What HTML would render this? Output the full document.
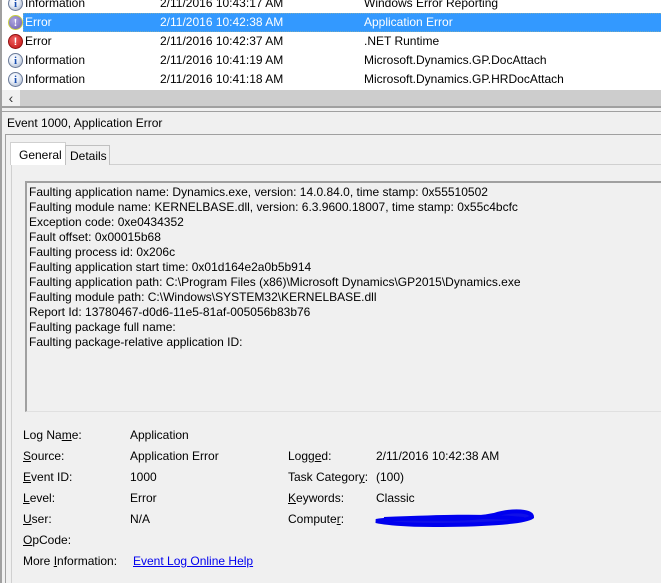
<!DOCTYPE html>
<html><head><style>
*{margin:0;padding:0;box-sizing:border-box}
body{width:661px;height:583px;overflow:hidden;background:#f0f0f0;font-family:"Liberation Sans",sans-serif;font-size:12px;color:#000;position:relative}
.a{position:absolute;white-space:nowrap}
.list{position:absolute;left:0;top:0;width:661px;height:106px;background:#fff;border-left:2px solid #a0a0a0}
.row{position:absolute;left:0;width:659px;height:19px}
.row span{position:absolute;top:2px}
.ic{position:absolute;left:6px;top:2px;width:15px;height:15px;border-radius:50%;color:#fff;font-weight:bold;font-size:11px;text-align:center;line-height:15px;font-family:"Liberation Serif",serif}
.info{background:radial-gradient(circle at 40% 35%,#fff 0,#e8eef8 40%,#9aa8c0 100%);border:1px solid #6a7a98;color:#1b4fb0}
.err{background:radial-gradient(circle at 40% 35%,#f06060,#c01010);border:1px solid #901010;font-family:"Liberation Sans",sans-serif}
.sel{background:#3399ff;color:#fff}
u{text-decoration:underline}
.lk{color:#0000ee;text-decoration:underline}
</style></head><body>
<div class="list">
 <div class="row" style="top:-6px"><div class="ic info">i</div><span style="left:23px">Information</span><span style="left:158px">2/11/2016 10:43:17 AM</span><span style="left:362px">Windows Error Reporting</span></div>
 <div class="row" style="top:13px"><div class="sel" style="position:absolute;left:21px;top:0;width:640px;height:19px;border:1px dotted #7ab"></div><div class="ic" style="background:radial-gradient(circle at 40% 35%,#b0a8e0,#6a5cb0);border:1px solid #c8d040">!</div><span style="left:23px;color:#fff">Error</span><span style="left:158px;color:#fff">2/11/2016 10:42:38 AM</span><span style="left:362px;color:#fff">Application Error</span></div>
 <div class="row" style="top:32px"><div class="ic err">!</div><span style="left:23px">Error</span><span style="left:158px">2/11/2016 10:42:37 AM</span><span style="left:362px">.NET Runtime</span></div>
 <div class="row" style="top:51px"><div class="ic info">i</div><span style="left:23px">Information</span><span style="left:158px">2/11/2016 10:41:19 AM</span><span style="left:362px">Microsoft.Dynamics.GP.DocAttach</span></div>
 <div class="row" style="top:70px"><div class="ic info">i</div><span style="left:23px">Information</span><span style="left:158px">2/11/2016 10:41:18 AM</span><span style="left:362px">Microsoft.Dynamics.GP.HRDocAttach</span></div>
 <div style="position:absolute;left:0;top:90px;width:659px;height:16px;background:#cdcdcd"></div>
 <div style="position:absolute;left:0;top:90px;width:18px;height:16px;background:#f0f0f0;font-size:14px;text-align:center;line-height:16px;color:#333">&#8249;</div>
</div>
<div class="a" style="left:0;top:106px;width:661px;height:2px;background:#a0a0a0"></div>
<div class="a" style="left:0;top:111px;width:661px;height:1px;background:#a0a0a0"></div>
<div class="a" style="left:0;top:108px;width:2px;height:475px;background:#a0a0a0"></div>
<div class="a" style="left:7px;top:116px;font-size:12px">Event 1000, Application Error</div>
<div class="a" style="left:5px;top:134px;width:656px;height:1px;background:#a0a0a0"></div>
<div class="a" style="left:5px;top:135px;width:1px;height:448px;background:#a0a0a0"></div>
<div class="a" style="left:11px;top:164px;width:700px;height:419px;border-left:1px solid #d0d0d0;border-top:1px solid #d0d0d0"></div>
<div class="a" style="left:10px;top:142px;width:56px;height:23px;background:#fff;border:1px solid #d0d0d0;border-bottom:none;padding:5px 0 0 8px">General</div>
<div class="a" style="left:65px;top:145px;width:45px;height:20px;background:#f0f0f0;border:1px solid #c0c0c0;border-bottom:none;padding:3px 0 0 4px">Details</div>
<div class="a" style="left:25px;top:181px;width:700px;height:231px;border-left:2px solid #a0a0a0;border-top:2px solid #a0a0a0;border-bottom:1px solid #e0e0e0;padding:2px 0 0 2px;line-height:15px;white-space:pre">Faulting application name: Dynamics.exe, version: 14.0.84.0, time stamp: 0x55510502
Faulting module name: KERNELBASE.dll, version: 6.3.9600.18007, time stamp: 0x55c4bcfc
Exception code: 0xe0434352
Fault offset: 0x00015b68
Faulting process id: 0x206c
Faulting application start time: 0x01d164e2a0b5b914
Faulting application path: C:\Program Files (x86)\Microsoft Dynamics\GP2015\Dynamics.exe
Faulting module path: C:\Windows\SYSTEM32\KERNELBASE.dll
Report Id: 13780467-d0d6-11e5-81af-005056b83b76
Faulting package full name: 
Faulting package-relative application ID: </div>
<div class="a" style="left:23px;top:428px">Log Na<u>m</u>e:</div><div class="a" style="left:130px;top:428px">Application</div>
<div class="a" style="left:23px;top:449px"><u>S</u>ource:</div><div class="a" style="left:130px;top:449px">Application Error</div>
<div class="a" style="left:288px;top:449px">Logg<u>e</u>d:</div><div class="a" style="left:376px;top:449px">2/11/2016 10:42:38 AM</div>
<div class="a" style="left:23px;top:470px"><u>E</u>vent ID:</div><div class="a" style="left:130px;top:470px">1000</div>
<div class="a" style="left:288px;top:470px">Task Categor<u>y</u>:</div><div class="a" style="left:376px;top:470px">(100)</div>
<div class="a" style="left:23px;top:491px"><u>L</u>evel:</div><div class="a" style="left:130px;top:491px">Error</div>
<div class="a" style="left:288px;top:491px"><u>K</u>eywords:</div><div class="a" style="left:376px;top:491px">Classic</div>
<div class="a" style="left:23px;top:512px"><u>U</u>ser:</div><div class="a" style="left:130px;top:512px">N/A</div>
<div class="a" style="left:288px;top:512px">Compute<u>r</u>:</div>
<svg class="a" style="left:374px;top:505px" width="162" height="24"><path d="M2 16 C40 10 80 18 120 10 C140 4 158 6 158 12 C150 18 100 20 60 20 C30 20 10 18 2 16 Z M10 14 C60 12 110 10 150 14" stroke="#0000ee" stroke-width="4" fill="#1010e8"/></svg>
<div class="a" style="left:23px;top:533px"><u>O</u>pCode:</div>
<div class="a" style="left:23px;top:554px">More <u>I</u>nformation:</div><div class="a lk" style="left:133px;top:554px">Event Log Online Help</div>
</body></html>
